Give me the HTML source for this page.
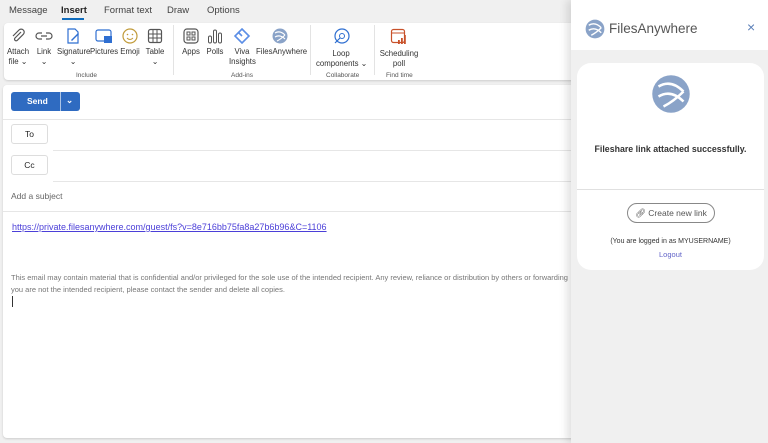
<!DOCTYPE html>
<html><head><meta charset="utf-8"><style>
*{box-sizing:border-box;margin:0;padding:0}
body{width:768px;height:443px;overflow:hidden;background:#f0f0f0;font-family:"Liberation Sans",sans-serif;position:relative;color:#242424}
.tabs{position:absolute;top:0;left:0;height:22px;width:300px;font-size:9.5px}
.tabs span{position:absolute;top:5px;color:#424242;white-space:nowrap}
.ribbon{position:absolute;left:4px;top:23px;width:580px;height:57px;background:#fff;border-radius:4px;box-shadow:0 1px 2px rgba(0,0,0,.15)}
.btn{position:absolute;text-align:center;font-size:7.8px;line-height:9.5px;color:#333;white-space:nowrap}
.btn svg{display:block;margin:0 auto 3px}
.grp{position:absolute;top:49px;font-size:6.5px;color:#555}
.sep{position:absolute;top:2px;width:1px;height:50px;background:#e3e3e3}
.compose{position:absolute;left:3px;top:85px;width:580px;height:353px;background:#fff;border-radius:4px;box-shadow:0 1px 2px rgba(0,0,0,.15)}
.hl{position:absolute;height:1px;background:#e6e6e6}
.field{position:absolute;left:8px;width:37px;height:20px;border:1px solid #ddd;border-radius:3px;font-size:8.5px;text-align:center;line-height:18px}
.panel{position:absolute;left:571px;top:0;width:197px;height:443px;background:#f0f0f0;box-shadow:-4px 0 8px rgba(0,0,0,.12)}
.phead{position:absolute;left:0;top:0;width:197px;height:50px;background:#fff}
.card{position:absolute;left:6px;top:63px;width:187px;height:207px;background:#fff;border-radius:14px}
</style></head><body>
<div class="tabs">
<span style="left:9px">Message</span>
<span style="left:61px;color:#242424;font-weight:bold">Insert</span>
<div style="position:absolute;left:62px;top:18px;width:22px;height:2px;background:#0f6cbd"></div>
<span style="left:104px">Format text</span>
<span style="left:167px">Draw</span>
<span style="left:207px">Options</span>
</div>
<div class="ribbon">
<div class="btn" style="left:2px;top:5px;width:24px"><svg width="16" height="16" viewBox="0 0 16 16"><path d="M11 4 5 10a1.6 1.6 0 0 0 2.3 2.3l6-6a3 3 0 0 0-4.3-4.3L3 8" fill="none" stroke="#555" stroke-width="1.2"/></svg>Attach<br>file ⌄</div>
<div class="btn" style="left:30px;top:5px;width:20px"><svg width="18" height="16" viewBox="0 0 18 16"><path d="M7 5H4a3 3 0 0 0 0 6h3M11 5h3a3 3 0 0 1 0 6h-3M6 8h6" fill="none" stroke="#555" stroke-width="1.2"/></svg>Link<br>⌄</div>
<div class="btn" style="left:53px;top:5px;width:32px"><svg width="16" height="16" viewBox="0 0 16 16"><path d="M3 1h7l3 3v11H3z" fill="none" stroke="#2f6fd1" stroke-width="1.2"/><path d="M6 12l7-7 1 1-7 7z" fill="#2f6fd1"/></svg>Signature<br>⌄</div>
<div class="btn" style="left:86px;top:5px;width:28px"><svg width="18" height="16" viewBox="0 0 18 16"><rect x="1" y="2" width="15" height="11" rx="2" fill="none" stroke="#2f6fd1" stroke-width="1.2"/><rect x="9" y="8" width="8" height="7" fill="#2f6fd1"/></svg>Pictures</div>
<div class="btn" style="left:116px;top:5px;width:20px"><svg width="16" height="16" viewBox="0 0 16 16"><circle cx="8" cy="8" r="7" fill="none" stroke="#c19b3a" stroke-width="1.2"/><circle cx="5.5" cy="6.5" r=".8" fill="#c19b3a"/><circle cx="10.5" cy="6.5" r=".8" fill="#c19b3a"/><path d="M5 10q3 3 6 0" fill="none" stroke="#c19b3a"/></svg>Emoji</div>
<div class="btn" style="left:141px;top:5px;width:20px"><svg width="16" height="16" viewBox="0 0 16 16"><rect x="1.5" y="1.5" width="13" height="13" rx="2" fill="none" stroke="#555" stroke-width="1.2"/><path d="M6 2v12M10 2v12M2 6h12M2 10h12" stroke="#555"/></svg>Table<br>⌄</div>
<div class="grp" style="left:72px">Include</div>
<div class="sep" style="left:169px"></div>
<div class="btn" style="left:176px;top:5px;width:22px"><svg width="16" height="16" viewBox="0 0 16 16"><rect x="1" y="1" width="14" height="14" rx="3" fill="none" stroke="#555" stroke-width="1.2"/><rect x="4" y="4" width="3" height="3" fill="none" stroke="#555"/><rect x="9" y="4" width="3" height="3" fill="none" stroke="#555"/><rect x="4" y="9" width="3" height="3" fill="none" stroke="#555"/><rect x="9" y="9" width="3" height="3" fill="none" stroke="#555"/></svg>Apps</div>
<div class="btn" style="left:201px;top:5px;width:20px"><svg width="16" height="16" viewBox="0 0 16 16"><rect x="1.5" y="8" width="3" height="7" rx="1.5" fill="none" stroke="#555"/><rect x="6.5" y="2" width="3" height="13" rx="1.5" fill="none" stroke="#555"/><rect x="11.5" y="5" width="3" height="10" rx="1.5" fill="none" stroke="#555"/></svg>Polls</div>
<div class="btn" style="left:225px;top:5px;width:26px"><svg width="18" height="16" viewBox="0 0 18 16"><path d="M9 1l7 7-7 7-7-7z" fill="none" stroke="#5b8ee6" stroke-width="1.6"/><path d="M5 4l4 4" stroke="#5b8ee6" stroke-width="1.6"/></svg>Viva<br>Insights</div>
<div class="btn" style="left:252px;top:5px;width:48px"><svg width="16" height="16" viewBox="0 0 16 16"><circle cx="8" cy="8" r="7.5" fill="#8aa3c8"/><path d="M3 5q5-3 10 2M3 9q5-3 10 2M5 13q4-2 8-6" stroke="#fff" stroke-width="1.1" fill="none"/></svg>FilesAnywhere</div>
<div class="grp" style="left:227px">Add-ins</div>
<div class="sep" style="left:306px"></div>
<div class="btn" style="left:312px;top:5px;width:50px"><svg width="18" height="18" viewBox="0 0 18 18"><circle cx="10" cy="8" r="7" fill="none" stroke="#2f6fd1" stroke-width="1.2"/><circle cx="10" cy="8" r="2.5" fill="none" stroke="#2f6fd1"/><path d="M8 10 3 15" stroke="#2f6fd1" stroke-width="1.2"/></svg>Loop<br>components ⌄</div>
<div class="grp" style="left:322px">Collaborate</div>
<div class="sep" style="left:370px"></div>
<div class="btn" style="left:374px;top:5px;width:42px"><svg width="18" height="18" viewBox="0 0 18 18"><rect x="1.5" y="1.5" width="13" height="13" rx="2" fill="none" stroke="#c8512a" stroke-width="1.2"/><path d="M2 5h12" stroke="#c8512a"/><rect x="11" y="10" width="1.8" height="6" fill="#c8512a"/><rect x="14" y="7" width="1.8" height="9" fill="#c8512a"/><rect x="8" y="12" width="1.8" height="4" fill="#c8512a"/></svg>Scheduling<br>poll</div>
<div class="grp" style="left:382px">Find time</div>
</div>
<div class="compose">
<div style="position:absolute;left:8px;top:7px;width:69px;height:19px;background:#2f6bc1;border-radius:3px;color:#fff;font-size:8.5px;font-weight:bold;line-height:19px">
<span style="position:absolute;left:16px">Send</span>
<div style="position:absolute;left:49px;top:0;width:1px;height:19px;background:#fff;opacity:.6"></div>
<span style="position:absolute;left:55px;top:-1px">⌄</span></div>
<div class="hl" style="left:0;top:34px;width:580px"></div>
<div class="field" style="top:39px">To</div>
<div class="hl" style="left:50px;top:65px;width:530px"></div>
<div class="field" style="top:70px">Cc</div>
<div class="hl" style="left:50px;top:96px;width:530px"></div>
<div style="position:absolute;left:8px;top:106px;font-size:8.5px;color:#666">Add a subject</div>
<div class="hl" style="left:0;top:126px;width:580px"></div>
<div style="position:absolute;left:9px;top:137px;font-size:9px;color:#4b3fd8;text-decoration:underline">https://private.filesanywhere.com/guest/fs?v=8e716bb75fa8a27b6b96&amp;C=1106</div>
<div style="position:absolute;left:8px;top:187px;font-size:7.5px;color:#777;line-height:12px;white-space:nowrap">This email may contain material that is confidential and/or privileged for the sole use of the intended recipient. Any review, reliance or distribution by others or forwarding<br>you are not the intended recipient, please contact the sender and delete all copies.</div>
<div style="position:absolute;left:9px;top:211px;width:1px;height:11px;background:#333"></div>
</div>
<div class="panel">
<div class="phead">
<svg style="position:absolute;left:14px;top:19px" width="20" height="20" viewBox="0 0 16 16"><circle cx="8" cy="8" r="7.5" fill="#8aa3c8"/><path d="M3 5q5-3 10 2M3 9q5-3 10 2M5 13q4-2 8-6" stroke="#fff" stroke-width="1.1" fill="none"/></svg>
<div style="position:absolute;left:38px;top:21px;font-size:13.5px;color:#555">FilesAnywhere</div>
<div style="position:absolute;left:176px;top:19px;font-size:14px;color:#5b7fb8">×</div>
</div>
<div class="card">
<svg style="position:absolute;left:74px;top:11px" width="40" height="40" viewBox="0 0 16 16"><circle cx="8" cy="8" r="7.5" fill="#8aa3c8"/><path d="M3 5q5-3 10 2M3 9q5-3 10 2M5 13q4-2 8-6" stroke="#fff" stroke-width="1" fill="none"/></svg>
<div style="position:absolute;left:0;width:187px;top:81px;text-align:center;font-size:8.8px;font-weight:bold;color:#333">Fileshare link attached successfully.</div>
<div style="position:absolute;left:0;top:126px;width:187px;height:1px;background:#e0e0e0"></div>
<div style="position:absolute;left:50px;top:140px;width:88px;height:20px;border:1px solid #888;border-radius:10px;font-size:8.5px;color:#555;line-height:18px;text-align:center">🔗︎ Create new link</div>
<div style="position:absolute;left:0;width:187px;top:175px;text-align:center;font-size:7px;color:#333">(You are logged in as MYUSERNAME)</div>
<div style="position:absolute;left:0;width:187px;top:187px;text-align:center;font-size:7.5px;color:#6264c8">Logout</div>
</div>
</div>
</body></html>
